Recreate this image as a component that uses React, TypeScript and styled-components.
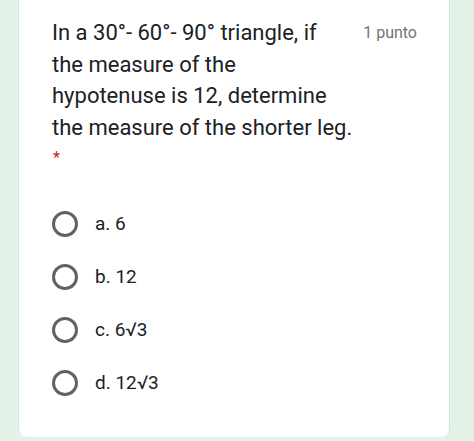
import React from 'react';
import styled, { createGlobalStyle } from 'styled-components';

const GlobalStyle = createGlobalStyle`
html, body {
    margin: 0;
    padding: 0;
    background: #e4f2e7;
    font-family: Roboto, "Liberation Sans", Arial, sans-serif;
}
`;

const Page = styled.div`
box-sizing: border-box;
width: 474px;
height: 441px;
padding: 0 24px 4px 18px;
display: flex;
`;

const Card = styled.div`
box-sizing: border-box;
flex: 1;
background: #fff;
border-radius: 0 0 8px 8px;
border-left: 1px solid #d6e3d9;
border-right: 1px solid #d6e3d9;
padding: 17px 32px 0 33px;
`;

const Header = styled.div`
display: flex;
justify-content: space-between;
align-items: flex-start;
`;

const Question = styled.div`
font-size: 22px;
line-height: 31.7px;
color: #202124;
white-space: nowrap;
`;

const Points = styled.div`
font-size: 16px;
color: #70757a;
padding-top: 6px;
`;

const Required = styled.div`
color: #c5221f;
font-size: 16px;
line-height: 20px;
margin-top: 4px;
padding-left: 1px;
`;

const Options = styled.div`
display: flex;
flex-direction: column;
gap: 27px;
margin-top: 43px;
`;

const Option = styled.label`
display: flex;
align-items: center;
gap: 17px;
font-size: 19px;
color: #202124;
height: 26px;
`;

const Radio = styled.span`
box-sizing: border-box;
width: 26px;
height: 26px;
border-radius: 50%;
border: 3px solid #5f6368;
flex-shrink: 0;
`;

const lines = [
    'In a 30°- 60°- 90° triangle, if',
    'the measure of the',
    'hypotenuse is 12, determine',
    'the measure of the shorter leg.',
];

const options = ['a. 6', 'b. 12', 'c. 6√3', 'd. 12√3'];

export default function App() {
    return (
        <>
            <GlobalStyle />
            <Page>
                <Card>
                    <Header>
                        <Question>
                            {lines.map(l => <div key={l}>{l}</div>)}
                        </Question>
                        <Points>1 punto</Points>
                    </Header>
                    <Required>*</Required>
                    <Options>
                        {options.map(o => (
                            <Option key={o}>
                                <Radio />
                                {o}
                            </Option>
                        ))}
                    </Options>
                </Card>
            </Page>
        </>
    );
}
